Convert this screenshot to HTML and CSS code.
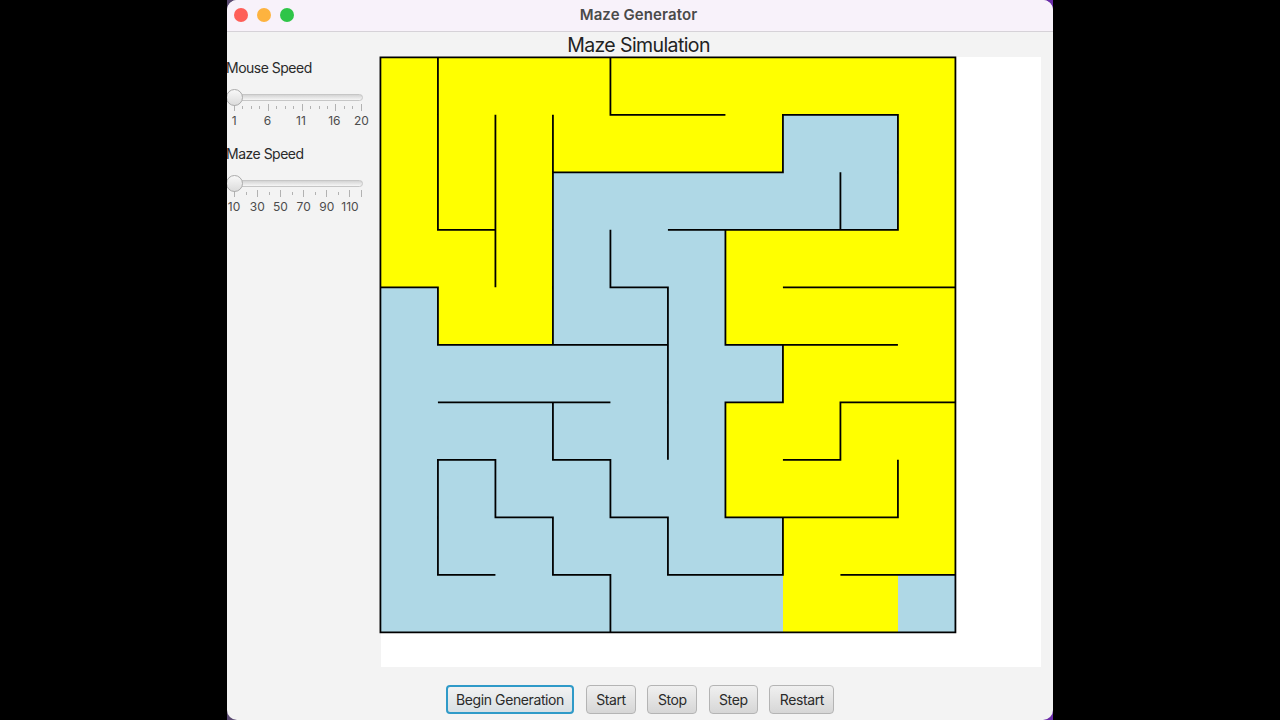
FILE: index.html
```html
<!DOCTYPE html>
<html lang="en">
<head>
    <meta charset="UTF-8">
    <title>Maze Generator</title>
    <link rel="stylesheet" href="styles.css">
</head>
<body>
<div class="desktop">
    <div class="window">
        <div class="titlebar">
            <div class="lights">
                <span class="light red"></span>
                <span class="light amber"></span>
                <span class="light green"></span>
            </div>
            <span class="window-title">Maze Generator</span>
        </div>

        <div class="sim-title">Maze Simulation</div>

        <div class="content">
            <div class="sidebar">
                <div class="control">
                    <div class="control-label">Mouse Speed</div>
                    <div class="slider">
                        <div class="track"></div>
                        <div class="thumb"></div>
                    </div>
                    <div class="ticks">
                        <span class="tick major"></span><span class="tick"></span><span class="tick"></span><span class="tick"></span>
                        <span class="tick major"></span><span class="tick"></span><span class="tick"></span><span class="tick"></span>
                        <span class="tick major"></span><span class="tick"></span><span class="tick"></span><span class="tick"></span>
                        <span class="tick major"></span><span class="tick"></span><span class="tick"></span><span class="tick major"></span>
                    </div>
                    <div class="tick-labels mouse">
                        <span>1</span><span>6</span><span>11</span><span>16</span><span>20</span>
                    </div>
                </div>
                <div class="control">
                    <div class="control-label">Maze Speed</div>
                    <div class="slider">
                        <div class="track"></div>
                        <div class="thumb"></div>
                    </div>
                    <div class="ticks">
                        <span class="tick major"></span><span class="tick"></span>
                        <span class="tick major"></span><span class="tick"></span>
                        <span class="tick major"></span><span class="tick"></span>
                        <span class="tick major"></span><span class="tick"></span>
                        <span class="tick major"></span><span class="tick"></span>
                        <span class="tick major"></span><span class="tick major"></span>
                    </div>
                    <div class="tick-labels maze-speed">
                        <span>10</span><span>30</span><span>50</span><span>70</span><span>90</span><span>110</span>
                    </div>
                </div>
            </div>

            <div class="canvas">
                <svg class="maze" viewBox="0.01 -0.005 10 10" width="575" height="575">
                    <!-- visited cells, one rect per row run -->
                    <rect class="yellow" x="0" y="0" width="10" height="10"/>
                    <rect class="blue" x="7" y="1" width="2" height="1"/>
                    <rect class="blue" x="3" y="2" width="6" height="1"/>
                    <rect class="blue" x="3" y="3" width="3" height="1"/>
                    <rect class="blue" x="0" y="4" width="1" height="1"/>
                    <rect class="blue" x="3" y="4" width="3" height="1"/>
                    <rect class="blue" x="0" y="5" width="7" height="1"/>
                    <rect class="blue" x="0" y="6" width="6" height="2"/>
                    <rect class="blue" x="0" y="8" width="7" height="2"/>
                    <rect class="blue" x="9" y="9" width="1" height="1"/>

                    <!-- walls -->
                    <path class="walls" d="M0 0H10V10H0Z
                        M1 0V3H2 M2 1V4 M3 1V5 M4 0V1H6
                        M3 2H7V1H9V3H5 M8 2V3
                        M4 3V4H5V7 M6 3V5H9 M7 4H10
                        M0 4H1V5H5
                        M7 5V6H6V8H9V7
                        M10 6H8V7H7
                        M1 6H4 M3 6V7H4V8H5V9H7V8
                        M8 9H10
                        M2 9H1V7H2V8H3V9H4V10"/>
                </svg>
            </div>
        </div>

        <div class="buttons">
            <button class="btn focused">Begin Generation</button>
            <button class="btn">Start</button>
            <button class="btn">Stop</button>
            <button class="btn">Step</button>
            <button class="btn">Restart</button>
        </div>
    </div>
</div>
</body>
</html>
```

FILE: styles.css
```css
body {
    margin: 0;
    background-color: #000;
    font-family: Inter, "Liberation Sans", sans-serif;
    overflow: hidden;
}
.desktop {
    width: 826px;
    height: 720px;
    margin-left: 227px;
    background: linear-gradient(to right, #5a4a70, #6a2ca8);
}
.window {
    width: 826px;
    height: 720px;
    background-color: #f3f3f3;
    border-radius: 10px;
    overflow: hidden;
    display: flex;
    flex-direction: column;
}
.titlebar {
    position: relative;
    height: 31px;
    flex-shrink: 0;
    background-color: #f8f2fa;
    border-bottom: 1px solid #d6d2d8;
    display: flex;
    align-items: center;
    justify-content: center;
}
.lights {
    position: absolute;
    left: 7px;
    top: 8px;
    display: flex;
    gap: 9px;
}
.light {
    width: 14px;
    height: 14px;
    border-radius: 50%;
}
.red { background-color: #fe5f58; }
.amber { background-color: #fdb33f; }
.green { background-color: #2fc548; }
.window-title {
    margin-bottom: 3px;
    margin-right: 3px;
    font-size: 15px;
    font-weight: 600;
    letter-spacing: 0.1px;
    color: #4a4a4a;
}
.sim-title {
    height: 25px;
    flex-shrink: 0;
    padding-right: 3px;
    line-height: 26px;
    text-align: center;
    font-size: 19.5px;
    letter-spacing: -0.6px;
    color: #222;
}
.content {
    display: flex;
}
.sidebar {
    width: 154px;
    flex-shrink: 0;
    overflow: hidden;
}
.control {
    height: 86px;
}
.control-label {
    height: 20px;
    margin-left: -1px;
    line-height: 21px;
    font-size: 14px;
    letter-spacing: -0.5px;
    color: #2a2a2a;
}
.slider {
    position: relative;
    height: 13px;
    margin-top: 10px;
    padding-top: 7px;
}
.track {
    width: 136px;
    height: 7px;
    box-sizing: border-box;
    background: linear-gradient(to bottom, #d4d4d4, #f6f6f6);
    border: 1px solid #c6c6c6;
    border-radius: 4px;
}
.thumb {
    position: absolute;
    left: -1px;
    top: 2px;
    width: 17px;
    height: 17px;
    box-sizing: border-box;
    border-radius: 50%;
    border: 1px solid #aaa;
    background: linear-gradient(to bottom, #f8f8f8, #dcdcdc);
}
.ticks {
    width: 128px;
    height: 7px;
    margin-left: 7px;
    margin-top: -3px;
    display: flex;
    justify-content: space-between;
    align-items: center;
}
.tick {
    width: 1px;
    height: 3px;
    background-color: #b2b2b2;
}
.major {
    height: 7px;
}
.tick-labels {
    display: flex;
    margin-top: 3px;
    font-size: 12px;
    line-height: 14px;
    color: #4c4c4c;
}
.tick-labels span {
    flex-shrink: 0;
    text-align: center;
}
.mouse {
    margin-left: -9.5px;
}
.mouse span {
    width: 33.4px;
}
.mouse span:last-child {
    width: 20.6px;
}
.maze-speed {
    margin-left: -4.5px;
}
.maze-speed span {
    width: 23.2px;
}
.canvas {
    width: 660px;
    height: 610px;
    background-color: #fff;
}
.maze {
    display: block;
    overflow: visible;
}
.yellow, .blue {
    shape-rendering: crispEdges;
}
.yellow { fill: #ffff00; }
.blue { fill: #afd8e6; }
.walls {
    fill: none;
    stroke: #000;
    stroke-width: 0.031;
}
.buttons {
    display: flex;
    justify-content: center;
    gap: 11.25px;
    padding-top: 18px;
}
.btn {
    height: 29px;
    padding: 0 9.5px;
    font-family: inherit;
    font-size: 14px;
    letter-spacing: -0.4px;
    color: #2a2a2a;
    background: linear-gradient(to bottom, #f0f0f0, #d6d6d6);
    border: 1px solid #b4b4b4;
    border-radius: 4px;
}
.focused {
    border: 2px solid #2f9ac8;
    padding: 0 8.5px;
    background: linear-gradient(to bottom, #f2f2f2, #d8e0e4);
}
```
